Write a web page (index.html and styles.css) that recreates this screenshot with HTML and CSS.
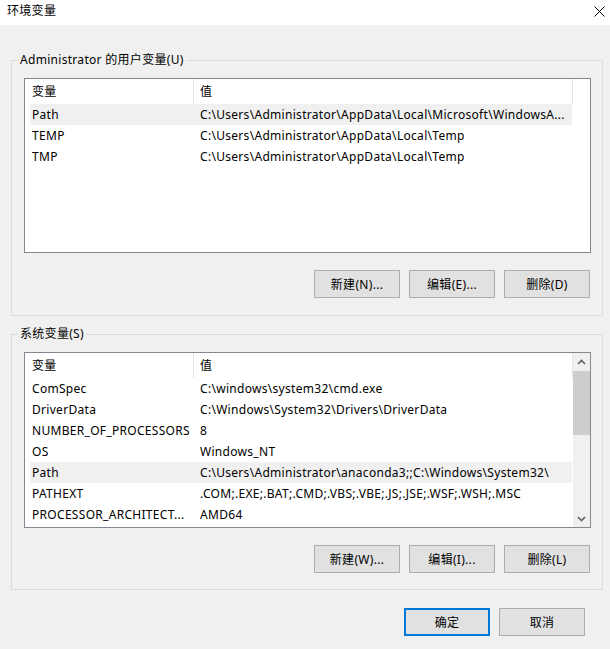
FILE: index.html
```html
<!DOCTYPE html>
<html lang="zh-CN">
<head>
  <meta charset="UTF-8" />
  <title>环境变量</title>
  <link rel="stylesheet" href="styles.css">
</head>
<body>
  <div class="titlebar">
    <span class="title">环境变量</span>
    <svg class="close" width="11" height="11" viewBox="0 0 11 11">
      <path d="M0.5 0.5L10.5 10.5M10.5 0.5L0.5 10.5" stroke="#000" stroke-width="1" fill="none" />
    </svg>
  </div>

  <div class="content">
    <fieldset class="group group-user">
      <legend>Administrator 的用户变量(U)</legend>
      <div class="list list-user">
        <div class="list-body">
          <div class="list-head">
            <div class="hcell hname">变量</div>
            <div class="hcell hval">值</div>
          </div>
          <div class="row selected">
            <div class="cell cname">Path</div>
            <div class="cell cval">C:\Users\Administrator\AppData\Local\Microsoft\WindowsA...</div>
          </div>
          <div class="row">
            <div class="cell cname">TEMP</div>
            <div class="cell cval">C:\Users\Administrator\AppData\Local\Temp</div>
          </div>
          <div class="row">
            <div class="cell cname">TMP</div>
            <div class="cell cval">C:\Users\Administrator\AppData\Local\Temp</div>
          </div>
        </div>
      </div>
      <div class="btn-row">
        <button class="btn">新建(N)...</button>
        <button class="btn">编辑(E)...</button>
        <button class="btn">删除(D)</button>
      </div>
    </fieldset>

    <fieldset class="group group-sys">
      <legend>系统变量(S)</legend>
      <div class="list list-sys">
        <div class="list-body">
          <div class="list-head">
            <div class="hcell hname">变量</div>
            <div class="hcell hval">值</div>
          </div>
          <div class="row">
            <div class="cell cname">ComSpec</div>
            <div class="cell cval">C:\windows\system32\cmd.exe</div>
          </div>
          <div class="row">
            <div class="cell cname">DriverData</div>
            <div class="cell cval">C:\Windows\System32\Drivers\DriverData</div>
          </div>
          <div class="row">
            <div class="cell cname">NUMBER_OF_PROCESSORS</div>
            <div class="cell cval">8</div>
          </div>
          <div class="row">
            <div class="cell cname">OS</div>
            <div class="cell cval">Windows_NT</div>
          </div>
          <div class="row selected">
            <div class="cell cname">Path</div>
            <div class="cell cval">C:\Users\Administrator\anaconda3;;C:\Windows\System32\</div>
          </div>
          <div class="row">
            <div class="cell cname">PATHEXT</div>
            <div class="cell cval">.COM;.EXE;.BAT;.CMD;.VBS;.VBE;.JS;.JSE;.WSF;.WSH;.MSC</div>
          </div>
          <div class="row">
            <div class="cell cname">PROCESSOR_ARCHITECT...</div>
            <div class="cell cval">AMD64</div>
          </div>
        </div>
        <div class="scrollbar">
          <div class="sb-arrow">
            <svg width="9" height="6" viewBox="0 0 9 6"><path d="M1 5L4.5 1.5L8 5" stroke="#606060" stroke-width="1.6" fill="none" /></svg>
          </div>
          <div class="sb-thumb"></div>
          <div class="sb-track"></div>
          <div class="sb-arrow">
            <svg width="9" height="6" viewBox="0 0 9 6"><path d="M1 1L4.5 4.5L8 1" stroke="#606060" stroke-width="1.6" fill="none" /></svg>
          </div>
        </div>
      </div>
      <div class="btn-row">
        <button class="btn">新建(W)...</button>
        <button class="btn">编辑(I)...</button>
        <button class="btn">删除(L)</button>
      </div>
    </fieldset>

    <div class="dialog-buttons">
      <button class="btn btn-default">确定</button>
      <button class="btn">取消</button>
    </div>
  </div>
</body>
</html>
```

FILE: styles.css
```css
body {
  margin: 0;
  width: 610px;
  height: 649px;
  overflow: hidden;
  background-color: #f0f0f0;
  font-family: "Noto Sans", "Noto Sans CJK SC", sans-serif;
  font-size: 12px;
  letter-spacing: 0.3px;
  color: #000;
}
.titlebar {
  height: 25px;
  background-color: #fff;
  display: flex;
  justify-content: space-between;
  align-items: flex-start;
  padding: 0 5px 0 7px;
}
.title {
  line-height: 22px;
}
.close {
  margin-top: 6px;
}
.content {
  padding: 27px 7px 0 11px;
}
.group {
  margin: 0;
  min-width: 0;
  border: 1px solid #dcdcdc;
  padding: 10px 11px 17px 12px;
}
.group legend {
  padding: 0 2px;
  margin-left: -6px;
  line-height: 16px;
}
.group-sys {
  margin-top: 9px;
  padding-top: 11px;
  padding-bottom: 16px;
}
.group-sys legend {
  line-height: 18px;
}
.list {
  box-sizing: border-box;
  height: 175px;
  border: 1px solid #828790;
  background-color: #fff;
  display: flex;
}
.list-sys {
  height: 176px;
  margin-top: -2px;
}
.list-body {
  flex: 1;
  min-width: 0;
  overflow: hidden;
}
.list-head {
  display: flex;
  height: 25px;
}
.hcell {
  box-sizing: border-box;
  line-height: 26px;
  border-right: 1px solid #e5e5e5;
  white-space: nowrap;
}
.hname {
  width: 169px;
  padding-left: 7px;
}
.hval {
  width: 379px;
  padding-left: 6px;
}
.row {
  display: flex;
  height: 21px;
  line-height: 22px;
  margin-left: 5px;
  width: 542px;
}
.row.selected {
  background-color: #f0f0f0;
}
.cell {
  box-sizing: border-box;
  white-space: nowrap;
  overflow: hidden;
}
.cname {
  width: 163px;
  padding-left: 2px;
}
.cval {
  width: 379px;
  padding-left: 7px;
}
.scrollbar {
  width: 17px;
  background-color: #f0f0f0;
  display: flex;
  flex-direction: column;
}
.sb-arrow {
  height: 17px;
  display: flex;
  align-items: center;
  justify-content: center;
}
.sb-thumb {
  height: 64px;
  margin-top: 1px;
  background-color: #cdcdcd;
}
.sb-track {
  flex: 1;
}
.btn-row {
  display: flex;
  justify-content: flex-end;
  gap: 9px;
  margin-top: 17px;
  margin-right: 1px;
}
.btn {
  box-sizing: border-box;
  width: 86px;
  height: 28px;
  padding: 0;
  background-color: #e1e1e1;
  border: 1px solid #adadad;
  font-family: inherit;
  font-size: 12px;
  letter-spacing: inherit;
  color: #000;
}
.btn-default {
  border: 2px solid #0078d7;
}
.dialog-buttons {
  display: flex;
  justify-content: flex-end;
  gap: 9px;
  margin-top: 18px;
  margin-right: 18px;
}
```
